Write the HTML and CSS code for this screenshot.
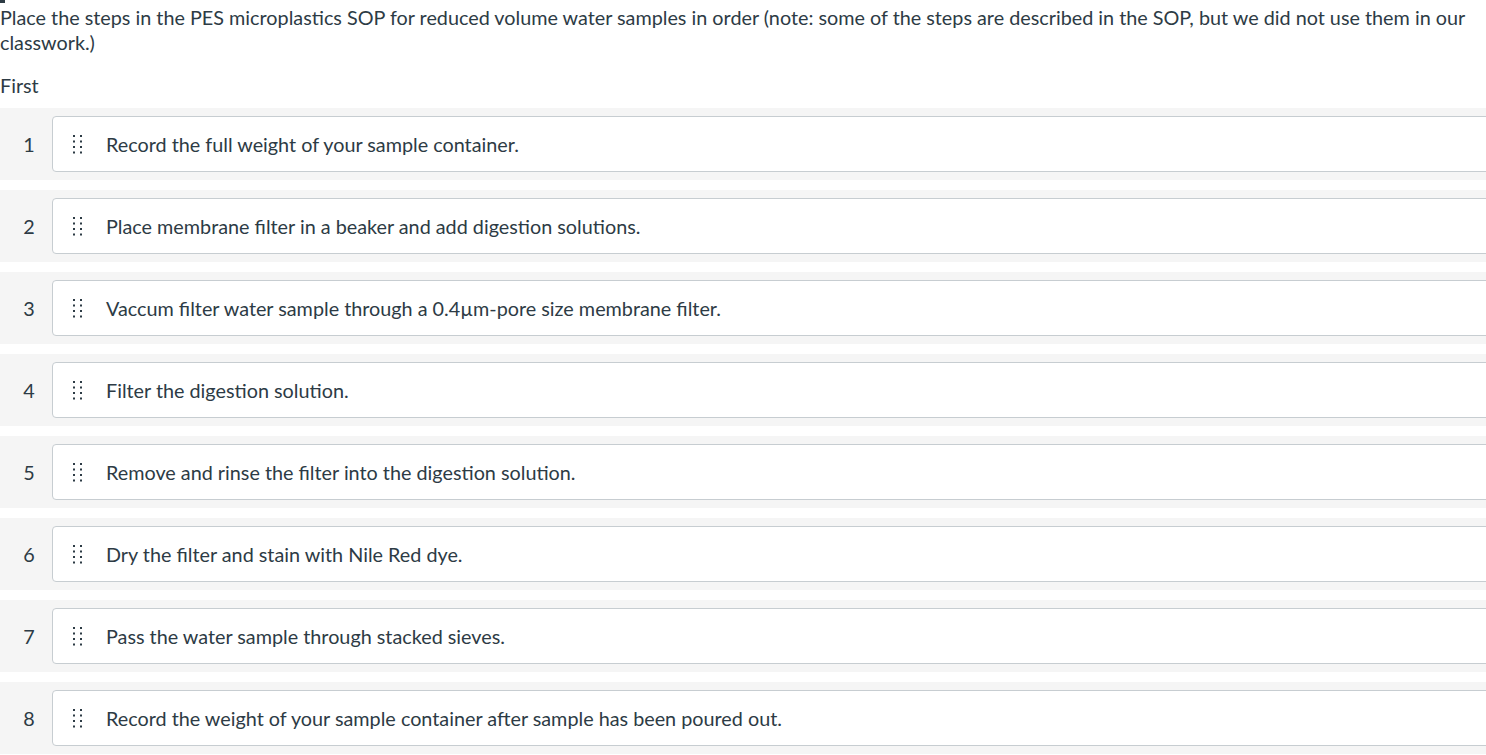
FILE: index.html
```html
<!DOCTYPE html>
<html>
<head>
<meta charset="utf-8">
<link rel="stylesheet" href="styles.css">
</head>
<body>
<div class="focus-mark"></div>
<div class="question">
  <p class="prompt">Place the steps in the PES microplastics SOP for reduced volume water samples in order (note: some of the steps are described in the SOP, but we did not use them in our classwork.)</p>
  <div class="label">First</div>
  <ol class="steps">
    <li class="step"><span class="num">1</span><div class="card"><span class="handle"><svg width="9" height="19" viewBox="0 0 9 19"><g fill="#2d3b45"><rect x="0" y="0" width="2" height="2"/><rect x="7" y="0" width="2" height="2"/><rect x="0" y="5.5" width="2" height="2"/><rect x="7" y="5.5" width="2" height="2"/><rect x="0" y="11" width="2" height="2"/><rect x="7" y="11" width="2" height="2"/><rect x="0" y="16.5" width="2" height="2"/><rect x="7" y="16.5" width="2" height="2"/></g></svg></span><span class="text">Record the full weight of your sample container.</span></div></li>
    <li class="step"><span class="num">2</span><div class="card"><span class="handle"><svg width="9" height="19" viewBox="0 0 9 19"><g fill="#2d3b45"><rect x="0" y="0" width="2" height="2"/><rect x="7" y="0" width="2" height="2"/><rect x="0" y="5.5" width="2" height="2"/><rect x="7" y="5.5" width="2" height="2"/><rect x="0" y="11" width="2" height="2"/><rect x="7" y="11" width="2" height="2"/><rect x="0" y="16.5" width="2" height="2"/><rect x="7" y="16.5" width="2" height="2"/></g></svg></span><span class="text">Place membrane filter in a beaker and add digestion solutions.</span></div></li>
    <li class="step"><span class="num">3</span><div class="card"><span class="handle"><svg width="9" height="19" viewBox="0 0 9 19"><g fill="#2d3b45"><rect x="0" y="0" width="2" height="2"/><rect x="7" y="0" width="2" height="2"/><rect x="0" y="5.5" width="2" height="2"/><rect x="7" y="5.5" width="2" height="2"/><rect x="0" y="11" width="2" height="2"/><rect x="7" y="11" width="2" height="2"/><rect x="0" y="16.5" width="2" height="2"/><rect x="7" y="16.5" width="2" height="2"/></g></svg></span><span class="text">Vaccum filter water sample through a 0.4µm-pore size membrane filter.</span></div></li>
    <li class="step"><span class="num">4</span><div class="card"><span class="handle"><svg width="9" height="19" viewBox="0 0 9 19"><g fill="#2d3b45"><rect x="0" y="0" width="2" height="2"/><rect x="7" y="0" width="2" height="2"/><rect x="0" y="5.5" width="2" height="2"/><rect x="7" y="5.5" width="2" height="2"/><rect x="0" y="11" width="2" height="2"/><rect x="7" y="11" width="2" height="2"/><rect x="0" y="16.5" width="2" height="2"/><rect x="7" y="16.5" width="2" height="2"/></g></svg></span><span class="text">Filter the digestion solution.</span></div></li>
    <li class="step"><span class="num">5</span><div class="card"><span class="handle"><svg width="9" height="19" viewBox="0 0 9 19"><g fill="#2d3b45"><rect x="0" y="0" width="2" height="2"/><rect x="7" y="0" width="2" height="2"/><rect x="0" y="5.5" width="2" height="2"/><rect x="7" y="5.5" width="2" height="2"/><rect x="0" y="11" width="2" height="2"/><rect x="7" y="11" width="2" height="2"/><rect x="0" y="16.5" width="2" height="2"/><rect x="7" y="16.5" width="2" height="2"/></g></svg></span><span class="text">Remove and rinse the filter into the digestion solution.</span></div></li>
    <li class="step"><span class="num">6</span><div class="card"><span class="handle"><svg width="9" height="19" viewBox="0 0 9 19"><g fill="#2d3b45"><rect x="0" y="0" width="2" height="2"/><rect x="7" y="0" width="2" height="2"/><rect x="0" y="5.5" width="2" height="2"/><rect x="7" y="5.5" width="2" height="2"/><rect x="0" y="11" width="2" height="2"/><rect x="7" y="11" width="2" height="2"/><rect x="0" y="16.5" width="2" height="2"/><rect x="7" y="16.5" width="2" height="2"/></g></svg></span><span class="text">Dry the filter and stain with Nile Red dye.</span></div></li>
    <li class="step"><span class="num">7</span><div class="card"><span class="handle"><svg width="9" height="19" viewBox="0 0 9 19"><g fill="#2d3b45"><rect x="0" y="0" width="2" height="2"/><rect x="7" y="0" width="2" height="2"/><rect x="0" y="5.5" width="2" height="2"/><rect x="7" y="5.5" width="2" height="2"/><rect x="0" y="11" width="2" height="2"/><rect x="7" y="11" width="2" height="2"/><rect x="0" y="16.5" width="2" height="2"/><rect x="7" y="16.5" width="2" height="2"/></g></svg></span><span class="text">Pass the water sample through stacked sieves.</span></div></li>
    <li class="step"><span class="num">8</span><div class="card"><span class="handle"><svg width="9" height="19" viewBox="0 0 9 19"><g fill="#2d3b45"><rect x="0" y="0" width="2" height="2"/><rect x="7" y="0" width="2" height="2"/><rect x="0" y="5.5" width="2" height="2"/><rect x="7" y="5.5" width="2" height="2"/><rect x="0" y="11" width="2" height="2"/><rect x="7" y="11" width="2" height="2"/><rect x="0" y="16.5" width="2" height="2"/><rect x="7" y="16.5" width="2" height="2"/></g></svg></span><span class="text">Record the weight of your sample container after sample has been poured out.</span></div></li>
  </ol>
</div>
</body>
</html>
```
FILE: styles.css
```css
html, body {
  margin: 0;
  padding: 0;
  background: #ffffff;
  overflow: hidden;
}
body {
  font-family: Lato, "Open Sans", sans-serif;
  color: #2d3b45;
  font-size: 19.8px;
  position: relative;
}
.focus-mark {
  position: absolute;
  left: 0;
  top: 0;
  width: 5px;
  height: 3px;
  background: #2d3b45;
}
.question {
  width: 1500px;
}
.prompt {
  margin: 0;
  padding-top: 5px;
  line-height: 25px;
  width: 1475px;
}
.label {
  margin-top: 18px;
  line-height: 25px;
  margin-bottom: 10px;
}
.steps {
  list-style: none;
  margin: 0;
  padding: 0;
  display: flex;
  flex-direction: column;
  gap: 10px;
}
.step {
  display: flex;
  align-items: center;
  background: #f5f5f5;
  height: 72px;
}
.num {
  width: 52px;
  padding-left: 14px;
  padding-right: 8px;
  box-sizing: border-box;
  text-align: center;
}
.card {
  flex: 1;
  height: 56px;
  box-sizing: border-box;
  background: #fff;
  border: 1px solid #c7cdd1;
  border-radius: 4px;
  display: flex;
  align-items: center;
}
.handle {
  display: flex;
  margin-left: 20px;
  width: 9px;
}
.text {
  margin-left: 24px;
}
```
